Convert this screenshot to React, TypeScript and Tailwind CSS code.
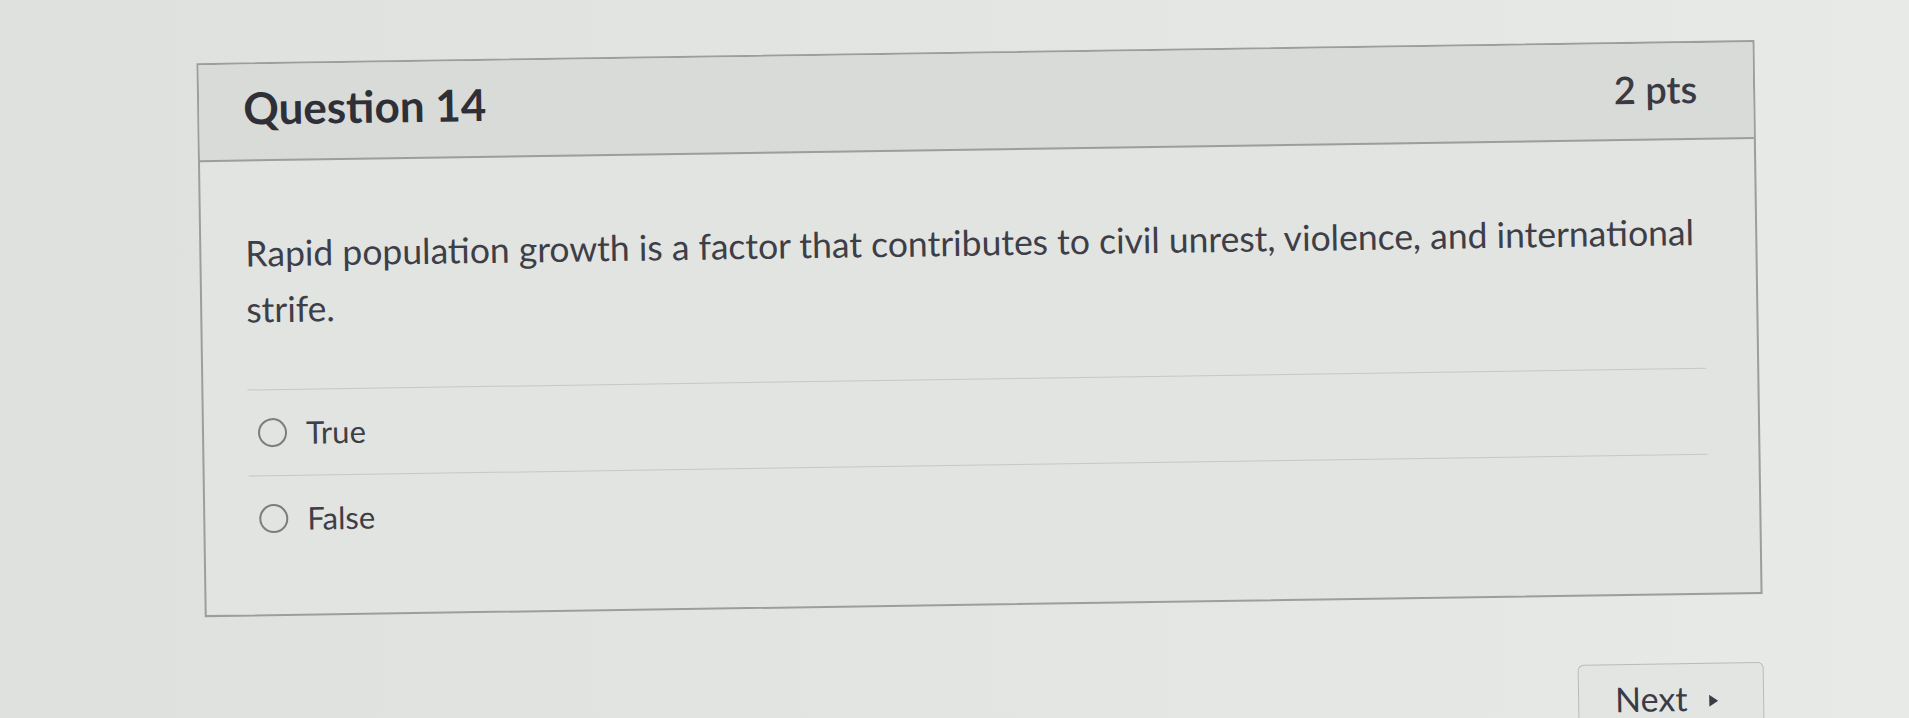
import { useState } from "react";

type Choice = { id: string; label: string };

const choices: Choice[] = [
    { id: "true", label: "True" },
    { id: "false", label: "False" },
];

function RadioRow({
    choice,
    checked,
    onSelect,
}: {
    choice: Choice;
    checked: boolean;
    onSelect: () => void;
}) {
    return (
        <label className="flex h-[86px] cursor-pointer items-center border-t border-[#c6c8c5] pl-[10px]">
            <span
                onClick={onSelect}
                className="flex h-[29px] w-[29px] items-center justify-center rounded-full border-2 border-[#7c7e7c]"
            >
                {checked && <span className="h-[13px] w-[13px] rounded-full bg-[#3d3d46]" />}
            </span>
            <span className="ml-[19px] text-[31px] leading-none text-[#3e3e48]">{choice.label}</span>
        </label>
    );
}

export default function App() {
    const [answer, setAnswer] = useState<string | null>(null);

    return (
        <div className="h-[718px] w-full overflow-hidden bg-gradient-to-r from-[#dfe1de] via-[#e3e5e2] to-[#e7eae6] font-['Lato','Liberation_Sans',sans-serif]">
            <div className="h-full w-full origin-center rotate-[-0.85deg]">
                <div className="ml-[201px] w-[1558px] pt-[52px]">
                    {/* question card */}
                    <div className="h-[554px] border-2 border-[#9c9e9c] bg-[#e2e4e1]">
                        <div className="flex h-[97px] items-baseline justify-between border-b-2 border-[#9c9e9c] bg-[#d9dbd8] pr-[56px] pl-[44px] pt-[21px]">
                            <h2 className="text-[44px] leading-none font-bold text-[#2f2f38]">Question 14</h2>
                            <span className="text-[38px] leading-none font-semibold text-[#3a3a44]">2 pts</span>
                        </div>

                        <div className="pt-[64px] pr-[51px] pl-[44px]">
                            <p className="mb-[52px] text-[35.5px] leading-[56px] text-[#3e3e48]">
                                Rapid population growth is a factor that contributes to civil unrest, violence, and
                                international strife.
                            </p>
                            {choices.map((c) => (
                                <RadioRow
                                    key={c.id}
                                    choice={c}
                                    checked={answer === c.id}
                                    onSelect={() => setAnswer(c.id)}
                                />
                            ))}
                        </div>
                    </div>

                    <div className="mt-[68px] flex justify-end">
                        <button className="flex h-[80px] w-[186px] items-start rounded-md border border-[#b9bbb8] bg-[#e3e5e2] pt-[17px] pl-[36px] text-[#3b3b48]">
                            <span className="text-[34px] leading-none">Next</span>
                            <svg
                                className="mt-[14px] ml-[22px]"
                                width="9"
                                height="12"
                                viewBox="0 0 9 12"
                                fill="currentColor"
                            >
                                <path d="M0 0 L9 6 L0 12 Z" />
                            </svg>
                        </button>
                    </div>
                </div>
            </div>
        </div>
    );
}
